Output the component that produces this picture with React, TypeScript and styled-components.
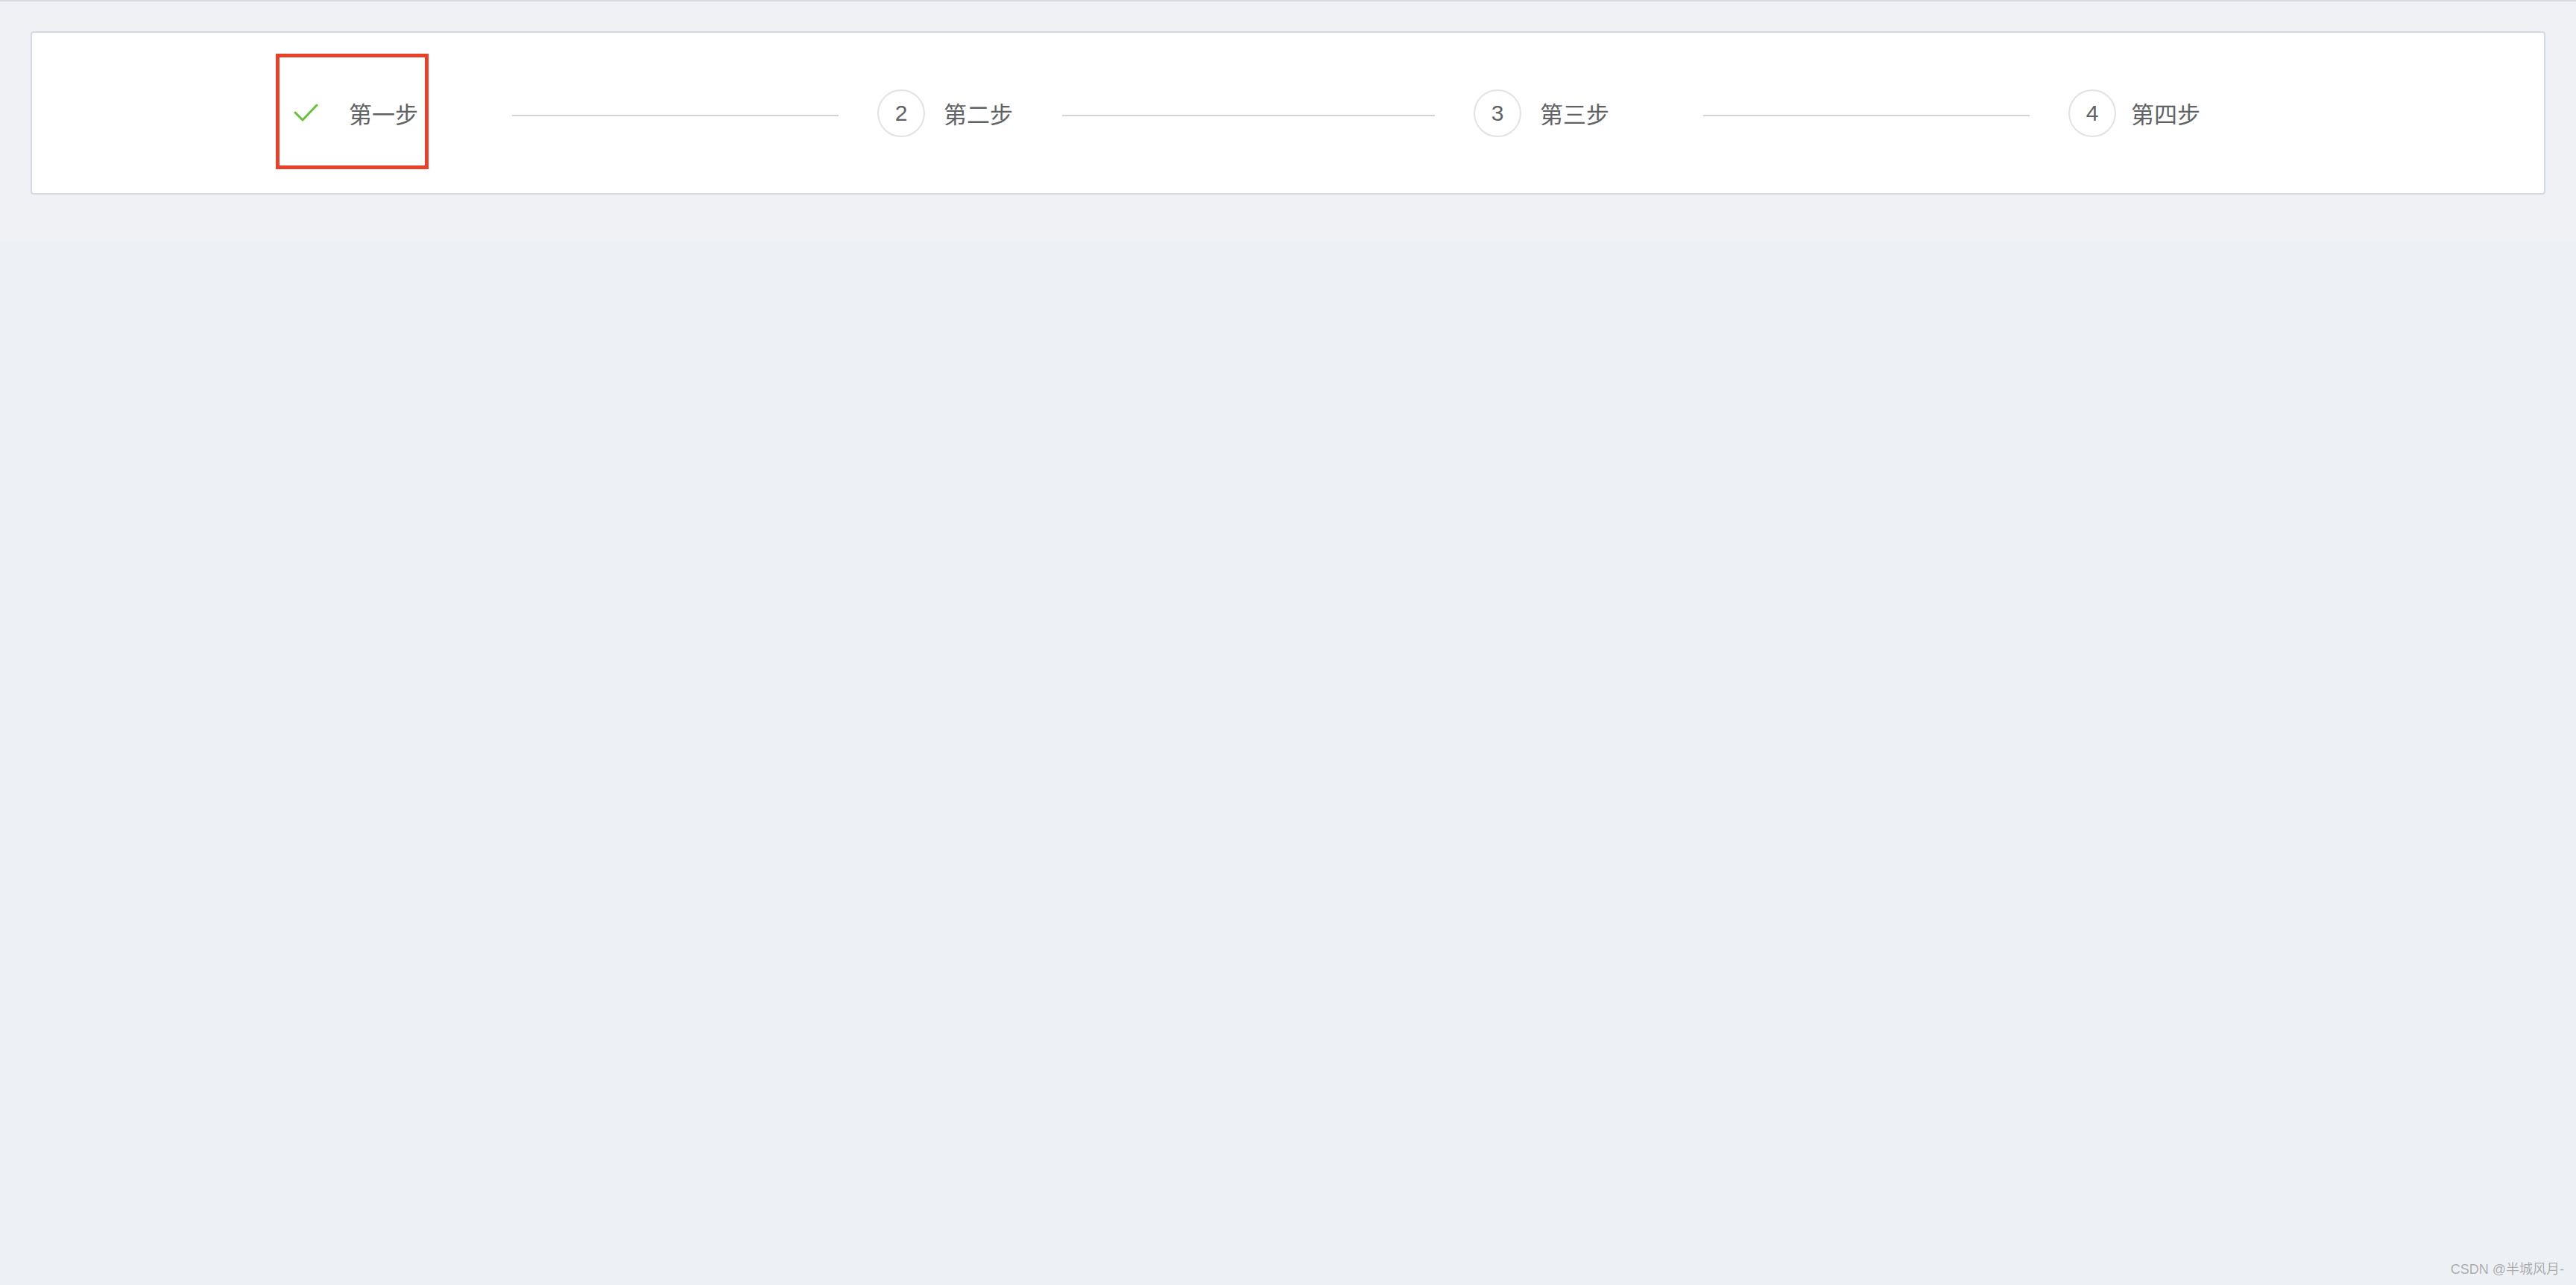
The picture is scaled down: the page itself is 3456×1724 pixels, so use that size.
import React from "react";
import styled, { createGlobalStyle } from "styled-components";

const Global = createGlobalStyle`
  html, body { margin: 0; padding: 0; }
  body {
    background: #edf0f4;
    font-family: "Noto Sans CJK SC", "Noto Sans", sans-serif;
    min-height: 1724px;
  }
`;

const Page = styled.div`
  display: flex;
  flex-direction: column;
  min-height: 1724px;
  border-top: 2px solid #d6d9df;
  box-sizing: border-box;
  position: relative;
`;

const Header = styled.div`
  background: #f0f1f5;
  height: 320px;
  padding: 40px 41px 0 41px;
  box-sizing: border-box;
`;

const Card = styled.div`
  position: relative;
  height: 219px;
  background: #ffffff;
  border: 2px solid #d3d8e4;
  border-radius: 4px;
  box-sizing: border-box;
  display: flex;
  align-items: center;
  padding-left: 336px;
`;

const StepRow = styled.div`
  display: flex;
  align-items: center;
`;

const IconBox = styled.div<{ $bordered?: boolean }>`
  width: 64px;
  height: 64px;
  box-sizing: border-box;
  border-radius: 50%;
  border: ${(p) => (p.$bordered ? "2px solid #e2e2e2" : "none")};
  display: flex;
  align-items: center;
  justify-content: center;
  font-family: "Liberation Sans", "Noto Sans", sans-serif;
  font-size: 30px;
  color: #606266;
  flex-shrink: 0;
`;

const Label = styled.span<{ $gap: number }>`
  margin-left: ${(p) => p.$gap}px;
  font-size: 31px;
  color: #606266;
  line-height: 1;
  white-space: nowrap;
`;

const Connector = styled.div<{ $left: number; $width: number }>`
  margin-left: ${(p) => p.$left}px;
  margin-right: 52px;
  margin-top: 6px;
  width: ${(p) => p.$width}px;
  height: 2px;
  background: #d4d4d4;
  flex-shrink: 0;
`;

const Highlight = styled.div`
  position: absolute;
  left: 327px;
  top: 28px;
  width: 205px;
  height: 155px;
  border: 5px solid #e8412a;
  box-sizing: border-box;
  pointer-events: none;
`;

const Watermark = styled.div`
  position: absolute;
  right: 16px;
  bottom: 10px;
  font-family: "Liberation Sans", "Noto Sans CJK SC", sans-serif;
  font-size: 18px;
  color: #a9abae;
  text-shadow: 0 0 1px #ffffff;
`;

const Check = () => (
  <svg width="40" height="40" viewBox="0 0 40 40">
    <polyline
      points="5,19 15,29 34,9"
      fill="none"
      stroke="#67c23a"
      strokeWidth="3"
      strokeLinecap="round"
      strokeLinejoin="round"
    />
  </svg>
);

type Step = { n: number; title: string; done?: boolean; gap: number; line?: { left: number; width: number } };

const steps: Step[] = [
  { n: 1, title: "第一步", done: true, gap: 25, line: { left: 126, width: 438 } },
  { n: 2, title: "第二步", gap: 25, line: { left: 66, width: 500 } },
  { n: 3, title: "第三步", gap: 25, line: { left: 126, width: 438 } },
  { n: 4, title: "第四步", gap: 20 },
];

export default function App() {
  return (
    <>
      <Global />
      <Page>
        <Header>
          <Card>
            {steps.map((s) => (
              <StepRow key={s.n}>
                <IconBox $bordered={!s.done}>{s.done ? <Check /> : s.n}</IconBox>
                <Label $gap={s.gap}>{s.title}</Label>
                {s.line && <Connector $left={s.line.left} $width={s.line.width} />}
              </StepRow>
            ))}
            <Highlight />
          </Card>
        </Header>
        <Watermark>CSDN @半城风月-</Watermark>
      </Page>
    </>
  );
}
